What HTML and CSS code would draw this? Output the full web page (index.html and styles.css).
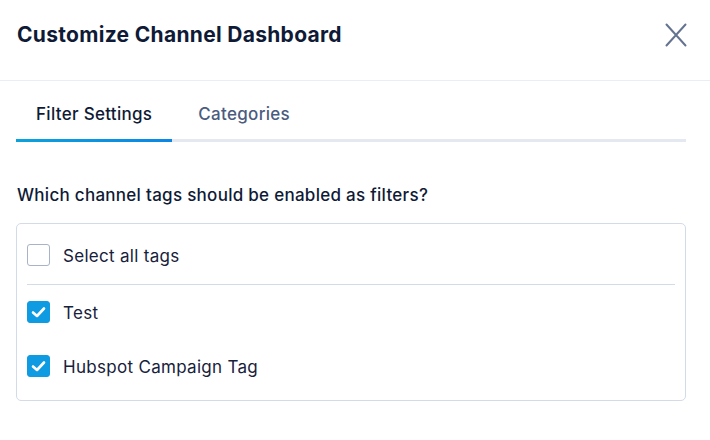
FILE: index.html
```html
<!DOCTYPE html>
<html>
<head>
<meta charset="utf-8">
<link rel="stylesheet" href="styles.css">
</head>
<body>
<div class="modal">
  <header class="header">
    <h1 class="title">Customize Channel Dashboard</h1>
    <button class="close" aria-label="Close">
      <svg width="22" height="24" viewBox="0 0 22 24"><path d="M1.5 1.5 L20.5 22.5 M20.5 1.5 L1.5 22.5" stroke="#64738f" stroke-width="2" stroke-linecap="round" fill="none"/></svg>
    </button>
  </header>
  <nav class="tabs">
    <div class="tab active">Filter Settings</div>
    <div class="tab">Categories</div>
  </nav>
  <section class="content">
    <p class="question">Which channel tags should be enabled as filters?</p>
    <div class="box">
      <label class="row first">
        <span class="cb"></span>
        <span class="label">Select all tags</span>
      </label>
      <div class="divider"></div>
      <label class="row">
        <span class="cb checked"><svg width="23" height="22" viewBox="0 0 23 22"><path d="M6 11.5 L10 15 L17 7.5" stroke="#fff" stroke-width="2.6" fill="none" stroke-linecap="round" stroke-linejoin="round"/></svg></span>
        <span class="label">Test</span>
      </label>
      <label class="row">
        <span class="cb checked"><svg width="23" height="22" viewBox="0 0 23 22"><path d="M6 11.5 L10 15 L17 7.5" stroke="#fff" stroke-width="2.6" fill="none" stroke-linecap="round" stroke-linejoin="round"/></svg></span>
        <span class="label">Hubspot Campaign Tag</span>
      </label>
    </div>
  </section>
</div>
</body>
</html>
```
FILE: styles.css
```css
* { box-sizing: border-box; }
html, body { margin: 0; padding: 0; background: #fff; }
body {
  font-family: Inter, "Noto Sans", sans-serif;
  color: #0f172a;
  width: 710px;
  height: 440px;
  overflow: hidden;
}
.header {
  height: 81px;
  border-bottom: 1px solid #e9eef6;
  display: flex;
  align-items: center;
  justify-content: space-between;
  padding: 0 23px 11px 17px;
}
.title {
  margin: 0;
  font-size: 21px;
  font-weight: 700;
  letter-spacing: 0.3px;
  color: #0f1a36;
}
.close {
  border: 0;
  background: none;
  padding: 0;
  width: 22px;
  height: 24px;
  display: flex;
  cursor: pointer;
}
.tabs {
  display: flex;
  margin: 0 24px 0 16px;
  border-bottom: 3px solid #e4e9f1;
  height: 61px;
}
.tab {
  padding: 8px 20px 0;
  font-size: 17px;
  font-weight: 500;
  letter-spacing: 0.3px;
  color: #4b5b80;
  display: flex;
  align-items: center;
  margin-bottom: -3px;
  border-bottom: 3px solid transparent;
  margin-right: 6px;
}
.tab.active {
  color: #0f1a36;
  border-image: linear-gradient(90deg, #0aa2dd, #0a86e6) 1;
}
.content {
  padding: 0 24px 0 16px;
}
.question {
  margin: 0;
  padding: 42px 0 17px 1px;
  font-size: 17px;
  font-weight: 500;
  letter-spacing: 0.28px;
  color: #0f1a36;
  line-height: 22px;
}
.box {
  border: 1px solid #d3dae8;
  border-radius: 5px;
  padding: 0 10px 7px;
}
.row {
  display: flex;
  align-items: center;
  height: 54px;
  gap: 13px;
  font-size: 17px;
  letter-spacing: 0.3px;
  color: #17213b;
}
.row.first { height: 60px; padding-top: 1px; }
.label { padding-top: 2px; }
.cb {
  width: 23px;
  height: 22px;
  border: 1.5px solid #a8b3c7;
  border-radius: 3px;
  display: flex;
  align-items: center;
  justify-content: center;
  flex: none;
  position: relative;
}
.cb.checked {
  background: #0e9be2;
  border-color: #0e9be2;
}
.cb svg { position: absolute; left: -1.5px; top: -1.5px; }
.divider {
  height: 1px;
  background: #d3dae8;
}
```
